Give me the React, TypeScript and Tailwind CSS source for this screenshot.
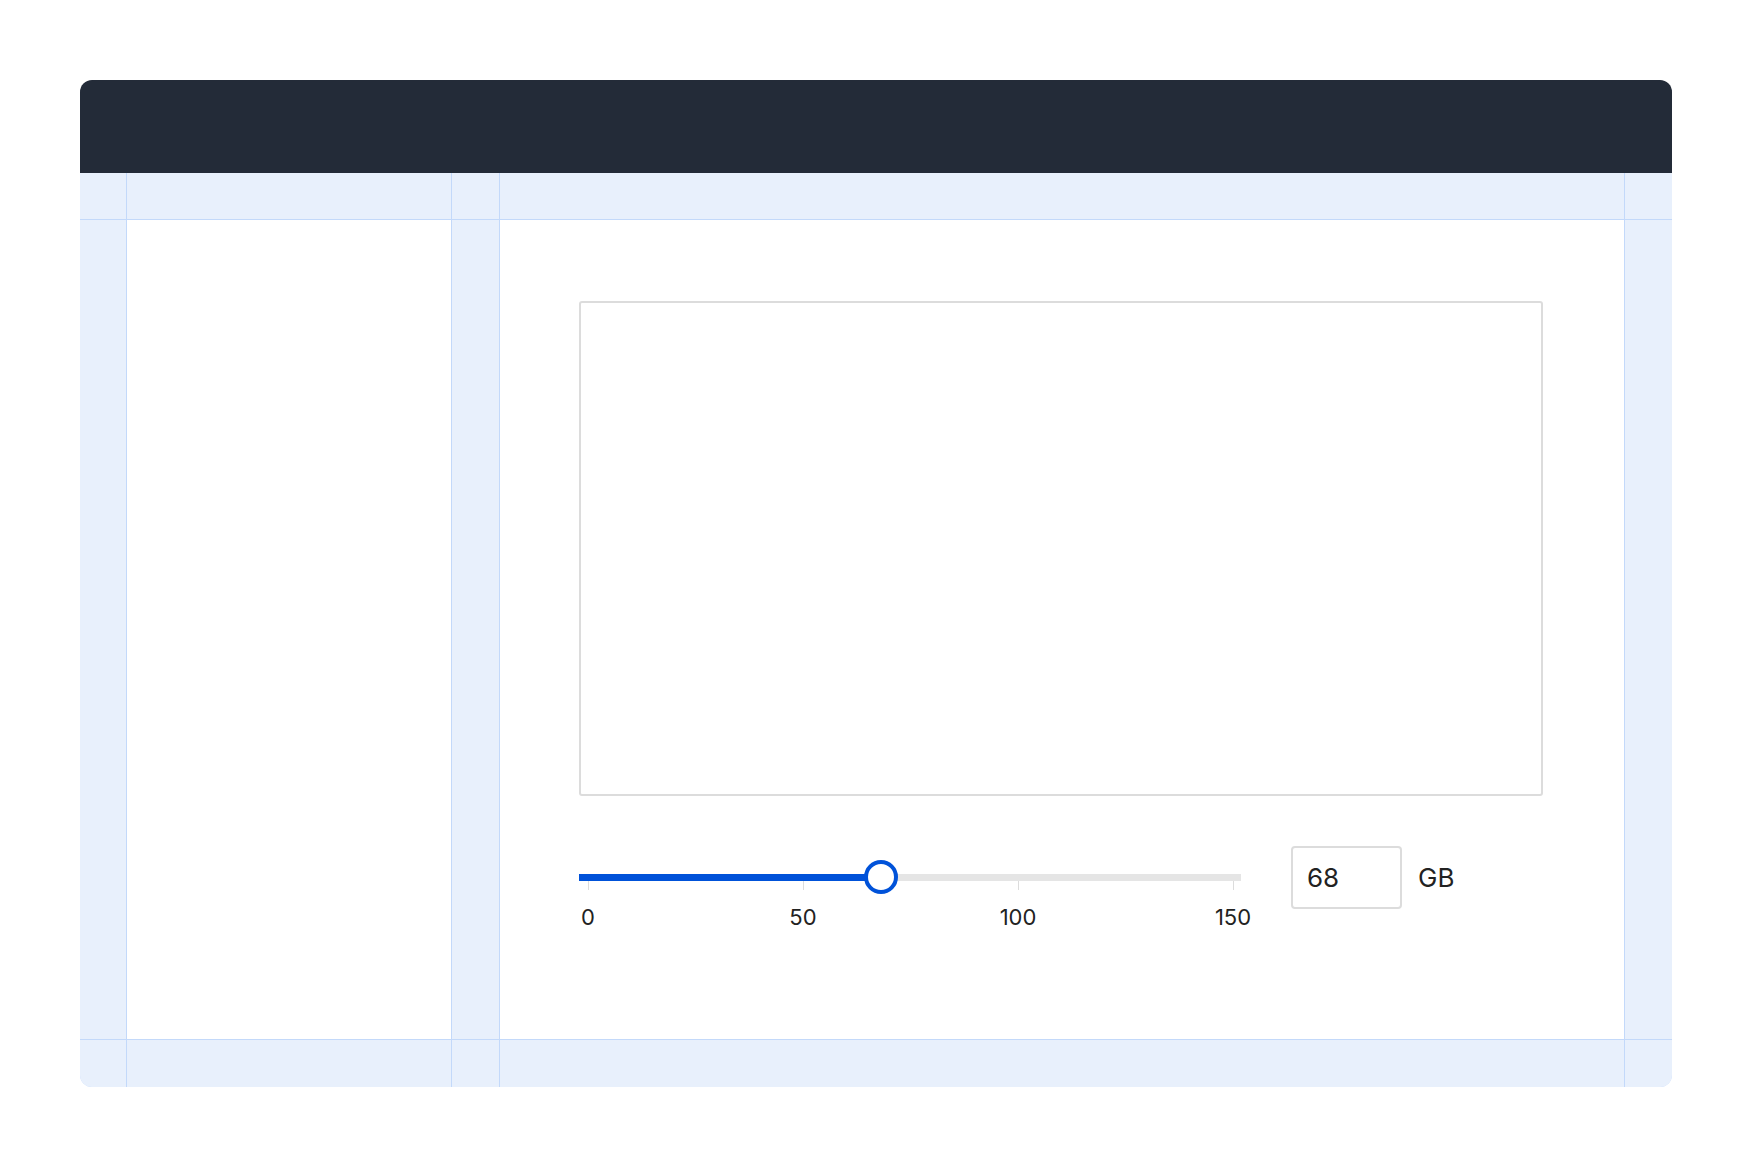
export default function App() {
  const ticks = [0, 50, 100, 150];
  return (
    <div className="w-[1744px] h-[1162px] bg-white pt-[80px] pl-[80px]" style={{ fontFamily: 'Inter, "Liberation Sans", sans-serif' }}>
      <div className="w-[1592px] rounded-xl overflow-hidden">
        <div className="h-[93px] bg-[#232b38]" />
        <div className="grid grid-cols-[46px_324px_47px_1124px_47px] grid-rows-[46px_819px_47px] gap-px bg-[#c3d9fa]">
          {Array.from({ length: 5 }).map((_, i) => (
            <div key={'t' + i} className="bg-[#e8f0fc]" />
          ))}
          <div className="bg-[#e8f0fc]" />
          <div className="bg-white" />
          <div className="bg-[#e8f0fc]" />
          <div className="bg-white pl-[79px] pt-[81px]">
            <div className="w-[964px] h-[495px] border-2 border-[#dcdcdc] rounded-[3px]" />
            <div className="flex items-start mt-[50px]">
              <div className="relative w-[662px] h-[100px]">
                <div className="absolute top-[28px] left-0 w-full h-[7px] bg-[#e5e5e5]" />
                <div className="absolute top-[28px] left-0 w-[302px] h-[7px] bg-[#0052d9]" />
                {ticks.map((t, i) => (
                  <div key={t} className="absolute top-[35px] w-px h-[9px] bg-[#dcdcdc]" style={{ left: 9 + i * 215 }} />
                ))}
                {ticks.map((t, i) => (
                  <div key={'l' + t} className="absolute top-[60px] -translate-x-1/2 text-[22px] text-[#222] leading-none" style={{ left: 9 + i * 215 }}>
                    {t}
                  </div>
                ))}
                <div className="absolute top-[14px] left-[285px] w-[34px] h-[34px] rounded-full bg-white border-[4px] border-[#0052d9]" />
              </div>
              <div className="ml-[50px] w-[111px] h-[63px] border-2 border-[#dcdcdc] rounded-[4px] flex items-center pl-[14px] text-[26px] text-[#222]">
                68
              </div>
              <div className="ml-[16px] h-[63px] flex items-center text-[26px] text-[#222]">GB</div>
            </div>
          </div>
          <div className="bg-[#e8f0fc]" />
          {Array.from({ length: 5 }).map((_, i) => (
            <div key={'b' + i} className="bg-[#e8f0fc]" />
          ))}
        </div>
      </div>
    </div>
  );
}
